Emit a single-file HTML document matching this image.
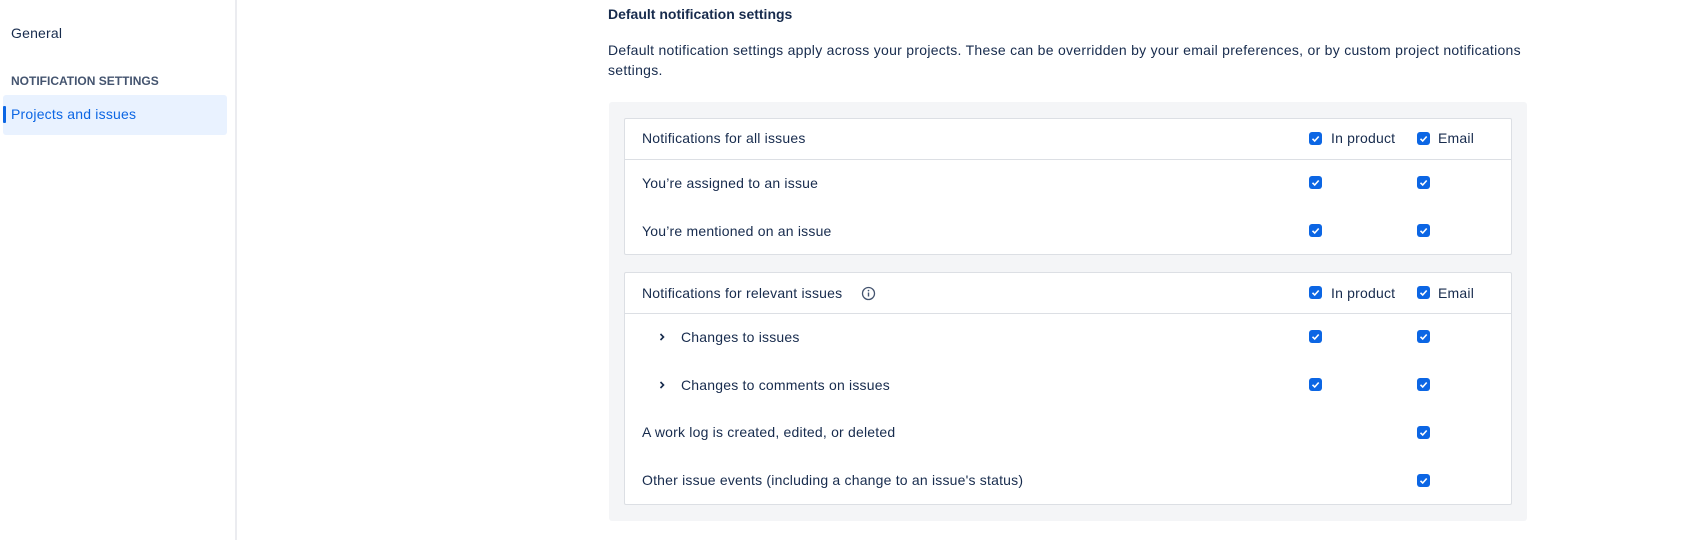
<!DOCTYPE html>
<html><head><style>
*{box-sizing:border-box;margin:0;padding:0}
body{width:1708px;height:540px;background:#fff;font-family:"Liberation Sans",sans-serif;color:#172b4d;font-size:14px;position:relative;overflow:hidden;letter-spacing:0.2px}
.a{position:absolute;white-space:nowrap}
.cb{position:absolute;width:13px;height:13px;background:#0c66e4;border-radius:3px}
.cb svg{position:absolute;left:0;top:0}
.card{position:absolute;left:624px;width:888px;background:#fff;border:1px solid #dcdfe4;border-radius:2px}
.line{position:absolute;left:0;right:0;height:1px;background:#dcdfe4}
</style></head><body>
<div class="a" style="left:235px;top:0;width:2px;height:540px;background:#ebecf0"></div>
<div class="a" style="left:11px;top:25px">General</div>
<div class="a" style="left:11px;top:74px;font-size:12px;font-weight:bold;color:#44546f;letter-spacing:0">NOTIFICATION SETTINGS</div>
<div class="a" style="left:3px;top:95px;width:224px;height:40px;background:#e9f2ff;border-radius:3px"></div>
<div class="a" style="left:3px;top:106px;width:3px;height:17px;background:#0c66e4;border-radius:1px"></div>
<div class="a" style="left:11px;top:106px;color:#0c66e4">Projects and issues</div>
<div class="a" style="left:608px;top:6px;font-weight:bold;letter-spacing:0">Default notification settings</div>
<div class="a" style="left:608px;top:40px;line-height:20px;letter-spacing:0.28px">Default notification settings apply across your projects. These can be overridden by your email preferences, or by custom project notifications<br>settings.</div>
<div class="a" style="left:609px;top:102px;width:918px;height:419px;background:#f4f5f7;border-radius:3px"></div>
<div class="card" style="top:118px;height:137px"><div class="line" style="top:40px"></div></div>
<div class="card" style="top:272px;height:233px"><div class="line" style="top:40px"></div></div>
<div class="a" style="left:642px;top:130px">Notifications for all issues</div>
<div class="a" style="left:1331px;top:130px">In product</div>
<div class="a" style="left:1438px;top:130px">Email</div>
<div class="a" style="left:642px;top:175px">You’re assigned to an issue</div>
<div class="a" style="left:642px;top:223px">You’re mentioned on an issue</div>
<div class="a" style="left:642px;top:285px">Notifications for relevant issues</div>
<svg class="a" style="left:861px;top:286px" width="15" height="15" viewBox="0 0 15 15"><circle cx="7.5" cy="7.5" r="6" fill="none" stroke="#44546f" stroke-width="1.3"/><rect x="6.8" y="6.5" width="1.4" height="4" fill="#44546f"/><circle cx="7.5" cy="4.6" r=".8" fill="#44546f"/></svg>
<div class="a" style="left:1331px;top:285px">In product</div>
<div class="a" style="left:1438px;top:285px">Email</div>
<svg class="a" style="left:657px;top:332px" width="10" height="10"><path d="M3.5 2l3 3-3 3" fill="none" stroke="#172b4d" stroke-width="1.6"/></svg>
<div class="a" style="left:681px;top:329px">Changes to issues</div>
<svg class="a" style="left:657px;top:380px" width="10" height="10"><path d="M3.5 2l3 3-3 3" fill="none" stroke="#172b4d" stroke-width="1.6"/></svg>
<div class="a" style="left:681px;top:377px">Changes to comments on issues</div>
<div class="a" style="left:642px;top:424px">A work log is created, edited, or deleted</div>
<div class="a" style="left:642px;top:472px">Other issue events (including a change to an issue's status)</div>
<div class="cb" style="left:1309px;top:132px"><svg width="13" height="13"><path d="M3.5 6.8l2.2 2.2 4-4.5" fill="none" stroke="#fff" stroke-width="1.6"/></svg></div>
<div class="cb" style="left:1417px;top:132px"><svg width="13" height="13"><path d="M3.5 6.8l2.2 2.2 4-4.5" fill="none" stroke="#fff" stroke-width="1.6"/></svg></div>
<div class="cb" style="left:1309px;top:176px"><svg width="13" height="13"><path d="M3.5 6.8l2.2 2.2 4-4.5" fill="none" stroke="#fff" stroke-width="1.6"/></svg></div>
<div class="cb" style="left:1417px;top:176px"><svg width="13" height="13"><path d="M3.5 6.8l2.2 2.2 4-4.5" fill="none" stroke="#fff" stroke-width="1.6"/></svg></div>
<div class="cb" style="left:1309px;top:224px"><svg width="13" height="13"><path d="M3.5 6.8l2.2 2.2 4-4.5" fill="none" stroke="#fff" stroke-width="1.6"/></svg></div>
<div class="cb" style="left:1417px;top:224px"><svg width="13" height="13"><path d="M3.5 6.8l2.2 2.2 4-4.5" fill="none" stroke="#fff" stroke-width="1.6"/></svg></div>
<div class="cb" style="left:1309px;top:286px"><svg width="13" height="13"><path d="M3.5 6.8l2.2 2.2 4-4.5" fill="none" stroke="#fff" stroke-width="1.6"/></svg></div>
<div class="cb" style="left:1417px;top:286px"><svg width="13" height="13"><path d="M3.5 6.8l2.2 2.2 4-4.5" fill="none" stroke="#fff" stroke-width="1.6"/></svg></div>
<div class="cb" style="left:1309px;top:330px"><svg width="13" height="13"><path d="M3.5 6.8l2.2 2.2 4-4.5" fill="none" stroke="#fff" stroke-width="1.6"/></svg></div>
<div class="cb" style="left:1417px;top:330px"><svg width="13" height="13"><path d="M3.5 6.8l2.2 2.2 4-4.5" fill="none" stroke="#fff" stroke-width="1.6"/></svg></div>
<div class="cb" style="left:1309px;top:378px"><svg width="13" height="13"><path d="M3.5 6.8l2.2 2.2 4-4.5" fill="none" stroke="#fff" stroke-width="1.6"/></svg></div>
<div class="cb" style="left:1417px;top:378px"><svg width="13" height="13"><path d="M3.5 6.8l2.2 2.2 4-4.5" fill="none" stroke="#fff" stroke-width="1.6"/></svg></div>
<div class="cb" style="left:1417px;top:426px"><svg width="13" height="13"><path d="M3.5 6.8l2.2 2.2 4-4.5" fill="none" stroke="#fff" stroke-width="1.6"/></svg></div>
<div class="cb" style="left:1417px;top:474px"><svg width="13" height="13"><path d="M3.5 6.8l2.2 2.2 4-4.5" fill="none" stroke="#fff" stroke-width="1.6"/></svg></div>
</body></html>
